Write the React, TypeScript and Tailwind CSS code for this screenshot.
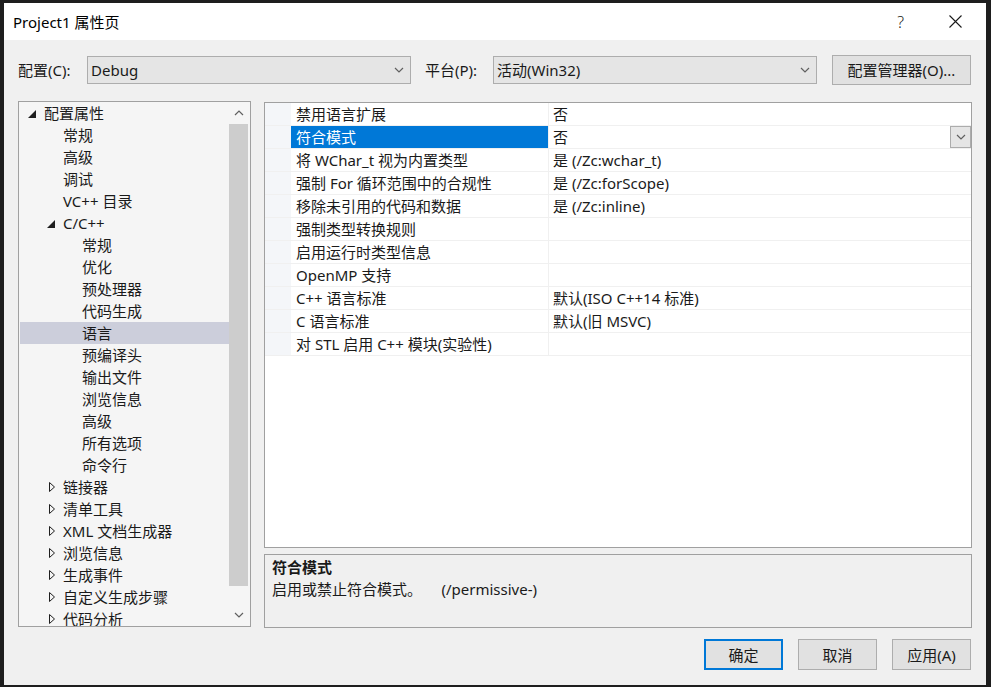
import React from "react";

const FONT = "font-['Noto_Sans','Noto_Sans_CJK_SC',sans-serif]";

type TreeItem = {
  label: string;
  level: number;
  state?: "open" | "closed";
  selected?: boolean;
};

const treeItems: TreeItem[] = [
  { label: "配置属性", level: 0, state: "open" },
  { label: "常规", level: 1 },
  { label: "高级", level: 1 },
  { label: "调试", level: 1 },
  { label: "VC++ 目录", level: 1 },
  { label: "C/C++", level: 1, state: "open" },
  { label: "常规", level: 2 },
  { label: "优化", level: 2 },
  { label: "预处理器", level: 2 },
  { label: "代码生成", level: 2 },
  { label: "语言", level: 2, selected: true },
  { label: "预编译头", level: 2 },
  { label: "输出文件", level: 2 },
  { label: "浏览信息", level: 2 },
  { label: "高级", level: 2 },
  { label: "所有选项", level: 2 },
  { label: "命令行", level: 2 },
  { label: "链接器", level: 1, state: "closed" },
  { label: "清单工具", level: 1, state: "closed" },
  { label: "XML 文档生成器", level: 1, state: "closed" },
  { label: "浏览信息", level: 1, state: "closed" },
  { label: "生成事件", level: 1, state: "closed" },
  { label: "自定义生成步骤", level: 1, state: "closed" },
  { label: "代码分析", level: 1, state: "closed" },
];

const props: { name: string; value: string; selected?: boolean }[] = [
  { name: "禁用语言扩展", value: "否" },
  { name: "符合模式", value: "否", selected: true },
  { name: "将 WChar_t 视为内置类型", value: "是 (/Zc:wchar_t)" },
  { name: "强制 For 循环范围中的合规性", value: "是 (/Zc:forScope)" },
  { name: "移除未引用的代码和数据", value: "是 (/Zc:inline)" },
  { name: "强制类型转换规则", value: "" },
  { name: "启用运行时类型信息", value: "" },
  { name: "OpenMP 支持", value: "" },
  { name: "C++ 语言标准", value: "默认(ISO C++14 标准)" },
  { name: "C 语言标准", value: "默认(旧 MSVC)" },
  { name: "对 STL 启用 C++ 模块(实验性)", value: "" },
];

function Chevron({ dir = "down" }: { dir?: "up" | "down" }) {
  return (
    <svg width="10" height="6" viewBox="0 0 10 6" className="shrink-0">
      <path
        d={dir === "down" ? "M1 1 L5 5 L9 1" : "M1 5 L5 1 L9 5"}
        fill="none"
        stroke="#606060"
        strokeWidth="1.2"
      />
    </svg>
  );
}

function Combo({ value }: { value: string }) {
  return (
    <div className="flex h-[28px] w-[324px] items-center justify-between border border-[#adadad] bg-[#e5e5e5] pl-[3px] pr-[6px]">
      <span>{value}</span>
      <Chevron />
    </div>
  );
}

function Arrow({ state }: { state?: "open" | "closed" }) {
  if (state === "open")
    return (
      <svg width="16" height="22" viewBox="0 0 16 22">
        <path d="M8 8 L8 16 L0 16 Z" fill="#1e1e1e" />
      </svg>
    );
  if (state === "closed")
    return (
      <svg width="16" height="22" viewBox="0 0 16 22">
        <path d="M2.5 6.5 L7.5 11 L2.5 15.5 Z" fill="none" stroke="#1e1e1e" strokeWidth="1" />
      </svg>
    );
  return <span className="w-[16px] shrink-0" />;
}

function Tree() {
  return (
    <div className="flex h-[526px] w-[233px] border border-[#a0a0a0] bg-[#f5f5f5]">
      <div className="flex-1 overflow-hidden pl-[1px]">
        {treeItems.map((it, i) => (
          <div
            key={i}
            className={`flex h-[22px] items-center whitespace-nowrap ${it.selected ? "bg-[#cccedb]" : ""}`}
            style={{ paddingLeft: 8 + it.level * 19 }}
          >
            <Arrow state={it.state} />
            <span>{it.label}</span>
          </div>
        ))}
      </div>
      <div className="mr-[2px] flex w-[19px] flex-col items-center">
        <div className="flex h-[22px] items-center">
          <Chevron dir="up" />
        </div>
        <div className="w-full flex-1 pb-[18px]">
          <div className="h-full w-full bg-[#cdcdcd]" />
        </div>
        <div className="flex h-[22px] items-center">
          <Chevron />
        </div>
      </div>
    </div>
  );
}

function Grid() {
  return (
    <div className="h-[446px] w-[708px] border border-[#a0a0a0] bg-white">
      {props.map((p, i) => (
        <div key={i} className="flex h-[23px] border-b border-[#f0f0f0]">
          <div className="w-[26px] shrink-0 bg-[#f4f6f9]" />
          <div
            className={`flex w-[258px] shrink-0 items-center border-r border-[#f0f0f0] pl-[5px] whitespace-nowrap ${
              p.selected ? "bg-[#0078d7] text-white" : ""
            }`}
          >
            {p.name}
          </div>
          <div className="flex flex-1 items-center justify-between pl-[4px] whitespace-nowrap">
            <span>{p.value}</span>
            {p.selected && (
              <div className="flex h-[22px] w-[21px] items-center justify-center border border-[#acacac] bg-[#e5e5e5]">
                <Chevron />
              </div>
            )}
          </div>
        </div>
      ))}
    </div>
  );
}

function Button({ children, primary }: { children: React.ReactNode; primary?: boolean }) {
  return (
    <div
      className={`flex h-[31px] w-[79px] items-center justify-center bg-[#e1e1e1] ${
        primary ? "border-2 border-[#0078d7]" : "border border-[#adadad]"
      }`}
    >
      {children}
    </div>
  );
}

export default function App() {
  return (
    <div className={`h-[687px] w-[991px] overflow-hidden bg-[#1e1e1e] pt-[3px] pl-[4px] text-[15px] leading-[22px] text-[#1a1a1a] ${FONT}`}>
      <div className="flex h-[682px] w-[982px] flex-col bg-[#f0f0f0]">
        {/* title bar */}
        <div className="flex h-[37px] items-center bg-white pl-[9px]">
          <span className="flex-1 text-black">Project1 属性页</span>
          <span className="mr-[45px] text-[16px] font-light">?</span>
          <svg width="13" height="13" viewBox="0 0 13 13" className="mr-[24px]">
            <path d="M0.5 0.5 L12.5 12.5 M12.5 0.5 L0.5 12.5" stroke="#1a1a1a" strokeWidth="1.1" />
          </svg>
        </div>

        {/* configuration row */}
        <div className="mt-[15px] flex h-[30px] items-center pl-[14px]">
          <span className="w-[69px]">配置(C):</span>
          <Combo value="Debug" />
          <span className="ml-[14px] w-[68px]">平台(P):</span>
          <Combo value="活动(Win32)" />
          <div className="ml-[15px] flex h-[30px] w-[139px] items-center justify-center border border-[#adadad] bg-[#e1e1e1]">
            配置管理器(O)...
          </div>
        </div>

        {/* main */}
        <div className="mt-[16px] flex pl-[14px]">
          <Tree />
          <div className="ml-[13px] flex flex-col pt-[1px]">
            <Grid />
            <div className="mt-[6px] h-[74px] w-[708px] border border-[#a0a0a0] px-[7px] pt-[1px]">
              <div className="font-bold">符合模式</div>
              <div className="whitespace-pre">启用或禁止符合模式。     (/permissive-)</div>
            </div>
          </div>
        </div>

        {/* buttons */}
        <div className="mt-[11px] flex justify-end gap-[15px] pr-[15px]">
          <Button primary>确定</Button>
          <Button>取消</Button>
          <Button>应用(A)</Button>
        </div>
      </div>
    </div>
  );
}
